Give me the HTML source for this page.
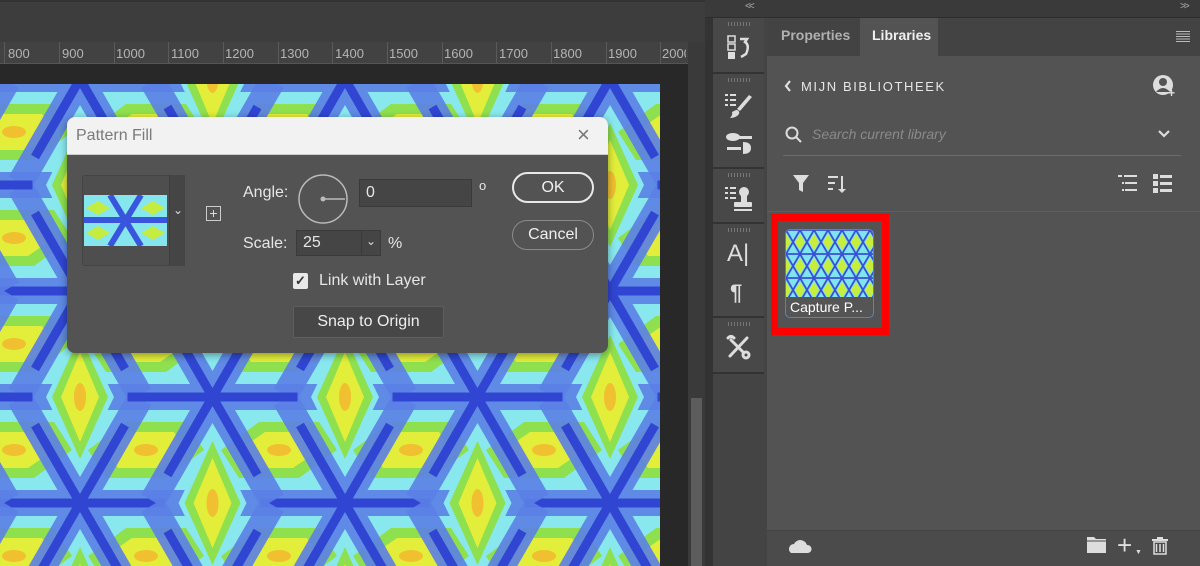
<!DOCTYPE html>
<html><head><meta charset="utf-8"><style>
*{margin:0;padding:0;box-sizing:border-box}
body{width:1200px;height:566px;overflow:hidden;background:#3c3c3c;font-family:"Liberation Sans",sans-serif;position:relative}
.a{position:absolute}
.rl{position:absolute;top:46px;font-size:13px;color:#b4b4b4}
.tk{position:absolute;top:42px;width:1px;height:22px;background:#5a5a5a}
.grp{position:absolute;left:713px;width:51px;background:#484848;border-bottom:2px solid #333}
.grip{position:absolute;left:15px;top:4px;width:22px;height:4px;background:repeating-linear-gradient(90deg,#777 0 1px,transparent 1px 3px)}
.dl{color:#e6e6e6;font-size:16px}
</style></head><body>
<div class="a" style="left:0;top:0;width:705px;height:42px;background:#3d3d3d;border-top:2px solid #333"></div>
<div class="a" style="left:0;top:42px;width:688px;height:22px;background:#424242;border-bottom:1px solid #555"></div>
<div class="tk" style="left:4px"></div><div class="rl" style="left:8px">800</div>
<div class="tk" style="left:59px"></div><div class="rl" style="left:62px">900</div>
<div class="tk" style="left:114px"></div><div class="rl" style="left:116px">1000</div>
<div class="tk" style="left:168px"></div><div class="rl" style="left:171px">1100</div>
<div class="tk" style="left:223px"></div><div class="rl" style="left:225px">1200</div>
<div class="tk" style="left:278px"></div><div class="rl" style="left:280px">1300</div>
<div class="tk" style="left:332px"></div><div class="rl" style="left:335px">1400</div>
<div class="tk" style="left:387px"></div><div class="rl" style="left:389px">1500</div>
<div class="tk" style="left:442px"></div><div class="rl" style="left:444px">1600</div>
<div class="tk" style="left:496px"></div><div class="rl" style="left:499px">1700</div>
<div class="tk" style="left:551px"></div><div class="rl" style="left:553px">1800</div>
<div class="tk" style="left:606px"></div><div class="rl" style="left:608px">1900</div>
<div class="tk" style="left:660px"></div><div class="rl" style="left:662px;width:24px;overflow:hidden">2000</div>
<div class="a" style="left:692px;top:46px;color:#bbb;font-size:12px">^</div>
<div class="a" style="left:0;top:64px;width:688px;height:502px;background:#282828"></div>
<div class="a" style="left:688px;top:42px;width:17px;height:524px;background:#3a3a3a"></div>
<div class="a" style="left:691px;top:398px;width:11px;height:168px;background:#5c5c5c"></div>
<svg class="a" style="left:0;top:84px" width="660" height="482">
<defs>
<g id="st"><g stroke="#5b7fe6" stroke-width="26" opacity="0.9">
<line x1="-105" y1="0" x2="105" y2="0"/><line x1="-60" y1="-104" x2="60" y2="104"/><line x1="60" y1="-104" x2="-60" y2="104"/></g>
<g stroke="#3046d2" stroke-width="9">
<line x1="-85" y1="0" x2="85" y2="0"/><line x1="-45" y1="-78" x2="45" y2="78"/><line x1="45" y1="-78" x2="-45" y2="78"/></g></g>
<g id="vd"><polygon points="0,-70 34,0 0,70 -34,0" fill="#88e8ee"/><polygon points="0,-62 28,0 0,62 -28,0" fill="#8fe04e"/><polygon points="0,-45 19,0 0,45 -19,0" fill="#e3ee3a"/><ellipse rx="6" ry="14" fill="#f0c030"/></g>
<g id="hd"><polygon points="-20,-28 40,-28 58,0 20,28 -40,28 -58,0" fill="#8fe04e"/><polygon points="-14,-18 28,-18 40,0 14,18 -28,18 -40,0" fill="#e3ee3a"/><ellipse rx="12" ry="6" fill="#f0c030"/></g>
<pattern id="p" patternUnits="userSpaceOnUse" x="80" y="-5" width="265" height="212">
<rect width="265" height="212" fill="#88e8ee"/>
<use href="#hd" x="66" y="53"/><use href="#hd" x="199" y="53"/><use href="#hd" x="66" y="159"/><use href="#hd" x="199" y="159"/>
<use href="#st" x="0" y="0"/><use href="#st" x="265" y="0"/><use href="#st" x="0" y="212"/><use href="#st" x="265" y="212"/><use href="#st" x="132.5" y="106"/>
<use href="#vd" x="132.5" y="0"/><use href="#vd" x="132.5" y="212"/><use href="#vd" x="0" y="106"/><use href="#vd" x="265" y="106"/>
</pattern></defs>
<rect width="660" height="482" fill="url(#p)"/>
</svg>
<div class="a" style="left:67px;top:117px;width:541px;height:236px;border-radius:8px;background:#535353;overflow:hidden;box-shadow:0 2px 8px rgba(0,0,0,.4)">
<div class="a" style="left:0;top:0;width:541px;height:38px;background:#f2f2f2;border-bottom:1px solid #ccc"></div>
<div class="a" style="left:9px;top:10px;font-size:16px;color:#7a7a7a">Pattern Fill</div>
<div class="a" style="left:510px;top:5px;font-size:22px;color:#777">×</div>
</div>
<div class="a" style="left:82px;top:175px;width:103px;height:91px;border:1px solid #444;border-radius:3px;background:#4e4e4e"></div>
<div class="a" style="left:169px;top:175px;width:16px;height:91px;background:#454545;border-left:1px solid #3c3c3c"></div>
<div class="a" style="left:173px;top:203px;color:#ddd;font-size:12px">⌄</div>
<svg class="a" style="left:84px;top:195px" width="83" height="51"><rect width="83" height="51" fill="#86e6ee"/>
<polygon points="14,6 26,13 14,20 2,13" fill="#c5ec40"/><polygon points="69,6 81,13 69,20 57,13" fill="#c5ec40"/><polygon points="14,31 26,38 14,45 2,38" fill="#c5ec40"/><polygon points="69,31 81,38 69,45 57,38" fill="#c5ec40"/>
<g stroke="#3a55dd" stroke-width="6"><line x1="0" y1="25" x2="83" y2="25"/><line x1="26" y1="0" x2="57" y2="51"/><line x1="57" y1="0" x2="26" y2="51"/></g></svg>
<div class="a" style="left:206px;top:206px;width:15px;height:15px;border:1px solid #ccc;color:#ddd;font-size:14px;line-height:12px;text-align:center">+</div>
<div class="a dl" style="left:243px;top:184px">Angle:</div>
<svg class="a" style="left:297px;top:173px" width="52" height="52"><circle cx="26" cy="26" r="24" fill="none" stroke="#bbb" stroke-width="1.5"/><circle cx="26" cy="26" r="2.5" fill="#bbb"/><line x1="26" y1="26" x2="48" y2="26" stroke="#bbb" stroke-width="1.5"/></svg>
<div class="a" style="left:359px;top:179px;width:113px;height:28px;background:#454545;border:1px solid #3a3a3a"></div>
<div class="a dl" style="left:366px;top:184px">0</div>
<div class="a dl" style="left:479px;top:178px;font-size:13px">o</div>
<div class="a" style="left:512px;top:172px;width:82px;height:31px;border:2px solid #e8e8e8;border-radius:16px;text-align:center;line-height:27px;color:#f0f0f0;font-size:16px">OK</div>
<div class="a" style="left:512px;top:220px;width:82px;height:30px;border:1px solid #8a8a8a;border-radius:15px;text-align:center;line-height:28px;color:#eee;font-size:16px">Cancel</div>
<div class="a dl" style="left:243px;top:235px">Scale:</div>
<div class="a" style="left:296px;top:230px;width:85px;height:26px;background:#454545;border:1px solid #3a3a3a"></div>
<div class="a" style="left:361px;top:230px;width:1px;height:26px;background:#3a3a3a"></div>
<div class="a dl" style="left:303px;top:234px">25</div>
<div class="a" style="left:366px;top:234px;color:#ddd;font-size:12px">⌄</div>
<div class="a dl" style="left:388px;top:235px">%</div>
<div class="a" style="left:293px;top:273px;width:15px;height:16px;background:#e8e8e8;border-radius:2px;color:#333;font-size:13px;line-height:16px;text-align:center;font-weight:bold">✓</div>
<div class="a dl" style="left:319px;top:272px">Link with Layer</div>
<div class="a" style="left:293px;top:306px;width:151px;height:32px;background:#474747;border:1px solid #5e5e5e;border-radius:2px;text-align:center;line-height:30px;color:#eee;font-size:16px">Snap to Origin</div>
<div class="a" style="left:705px;top:0;width:8px;height:566px;background:#333"></div>
<div class="a" style="left:705px;top:0;width:495px;height:18px;background:#3a3a3a;border-bottom:1px solid #2e2e2e"></div>
<div class="a" style="left:745px;top:1px;color:#aaa;font-size:10px;letter-spacing:-2px">&lt;&lt;</div>
<div class="a" style="left:1180px;top:1px;color:#aaa;font-size:10px;letter-spacing:-2px">&gt;&gt;</div>
<div class="a" style="left:713px;top:18px;width:54px;height:548px;background:#444"></div>
<div class="grp" style="top:18px;height:56px"><div class="grip"></div>
<svg class="a" style="left:14px;top:17px" width="26" height="26"><g fill="#ddd"><rect x="1" y="1" width="7" height="6" fill="none" stroke="#ddd" stroke-width="1.5"/><rect x="1" y="9" width="7" height="6" fill="none" stroke="#ddd" stroke-width="1.5"/><rect x="1" y="17" width="7" height="7"/></g><path d="M13 4 h7 l-2 3 q5 3 1 12 l-5 3" fill="none" stroke="#ddd" stroke-width="2.5"/></svg></div>
<div class="grp" style="top:74px;height:95px"><div class="grip"></div>
<svg class="a" style="left:11px;top:18px" width="30" height="70"><g fill="#ddd"><rect x="1" y="2" width="3" height="2"/><rect x="6" y="2" width="6" height="2"/><rect x="1" y="7" width="3" height="2"/><rect x="6" y="7" width="6" height="2"/><rect x="1" y="12" width="3" height="2"/><rect x="6" y="12" width="6" height="2"/>
<path d="M25 3 l3 2 l-12 14 l-3 -2z"/><path d="M12 18 q4 0 3 4 q-3 4 -9 4 q3 -3 2 -6z"/>
<ellipse cx="9" cy="45" rx="7" ry="4"/><rect x="14" y="44" width="14" height="3"/><rect x="3" y="55" width="14" height="3"/><path d="M19 50 q8 0 8 6 q0 6 -8 6z"/></g></svg></div>
<div class="grp" style="top:169px;height:55px"><div class="grip"></div>
<svg class="a" style="left:11px;top:16px" width="30" height="30"><g fill="#ddd"><rect x="1" y="2" width="3" height="2"/><rect x="6" y="2" width="6" height="2"/><rect x="1" y="7" width="3" height="2"/><rect x="6" y="7" width="6" height="2"/><rect x="1" y="12" width="3" height="2"/><rect x="6" y="12" width="6" height="2"/><circle cx="20" cy="7" r="5"/><rect x="17" y="10" width="6" height="8"/><rect x="10" y="17" width="18" height="5" rx="1"/><rect x="10" y="24" width="18" height="2"/></g></svg></div>
<div class="grp" style="top:224px;height:94px"><div class="grip"></div><div class="a" style="left:14px;top:16px;color:#ddd;font-size:24px">A|</div><div class="a" style="left:17px;top:56px;color:#ddd;font-size:22px;font-weight:bold">¶</div></div>
<div class="grp" style="top:318px;height:56px"><div class="grip"></div>
<svg class="a" style="left:12px;top:16px" width="28" height="28"><g stroke="#ddd" stroke-width="3" fill="none" stroke-linecap="round"><line x1="22" y1="4" x2="5" y2="22"/><line x1="6" y1="6" x2="18" y2="18"/><circle cx="21" cy="21" r="3"/><path d="M3 4 q3 -3 6 0"/></g></svg></div>
<div class="a" style="left:767px;top:18px;width:433px;height:548px;background:#535353"></div>
<div class="a" style="left:767px;top:18px;width:433px;height:38px;background:#434343"></div>
<div class="a" style="left:860px;top:18px;width:78px;height:38px;background:#535353"></div>
<div class="a" style="left:781px;top:27px;color:#b0b0b0;font-size:14px;font-weight:bold">Properties</div>
<div class="a" style="left:872px;top:27px;color:#f0f0f0;font-size:14px;font-weight:bold">Libraries</div>
<div class="a" style="left:1176px;top:31px;width:14px;height:11px;background:repeating-linear-gradient(#bbb 0 1px,transparent 1px 2.5px)"></div>
<svg class="a" style="left:783px;top:79px" width="10" height="14"><path d="M7 2 l-4 5 l4 5" fill="none" stroke="#e0e0e0" stroke-width="2.2"/></svg>
<div class="a" style="left:801px;top:79px;color:#e6e6e6;font-size:13px;letter-spacing:1.6px">MIJN BIBLIOTHEEK</div>
<svg class="a" style="left:1152px;top:74px" width="26" height="24"><circle cx="11" cy="11" r="10" fill="#ddd"/><circle cx="11" cy="8" r="4" fill="#535353"/><path d="M4 18 q7-8 14 0" fill="#535353"/><text x="16" y="23" fill="#ddd" font-size="12" font-family="Liberation Sans" font-weight="bold">+</text></svg>
<svg class="a" style="left:785px;top:126px" width="18" height="18"><circle cx="7" cy="7" r="5.5" fill="none" stroke="#ddd" stroke-width="2"/><line x1="11" y1="11" x2="16" y2="16" stroke="#ddd" stroke-width="2"/></svg>
<div class="a" style="left:812px;top:126px;color:#8a8a8a;font-size:14px;font-style:italic">Search current library</div>
<svg class="a" style="left:1157px;top:129px" width="14" height="10"><path d="M2 2 l5 5 l5 -5" fill="none" stroke="#ddd" stroke-width="2.2"/></svg>
<div class="a" style="left:783px;top:155px;width:398px;height:1px;background:#6a6a6a"></div>
<svg class="a" style="left:792px;top:174px" width="60" height="20"><path d="M1 1 h16 l-6 8 v9 l-4 -2 v-7z" fill="#ddd"/><g fill="#ddd"><rect x="36" y="2" width="10" height="2"/><rect x="36" y="8" width="7" height="2"/><rect x="36" y="14" width="5" height="2"/><rect x="49" y="2" width="2" height="15"/><path d="M46 15 h8 l-4 4z"/></g></svg>
<svg class="a" style="left:1118px;top:174px" width="60" height="20"><g fill="#ddd"><rect x="0" y="1" width="4" height="2"/><rect x="6" y="1" width="13" height="2"/><rect x="4" y="8" width="2" height="2"/><rect x="7" y="8" width="12" height="2"/><rect x="4" y="15" width="2" height="2"/><rect x="7" y="15" width="12" height="2"/>
<rect x="35" y="0" width="5" height="5"/><rect x="42" y="1" width="12" height="3"/><rect x="35" y="7" width="5" height="5"/><rect x="42" y="8" width="12" height="3"/><rect x="35" y="14" width="5" height="5"/><rect x="42" y="15" width="12" height="3"/></g></svg>
<div class="a" style="left:767px;top:211px;width:433px;height:1px;background:#5e5e5e"></div>
<div class="a" style="left:771px;top:214px;width:118px;height:121px;border:7px solid #ff0000"></div>
<div class="a" style="left:785px;top:229px;width:89px;height:89px;border:1.5px solid #5b7be0;border-radius:5px;overflow:hidden;background:#555">
<svg width="89" height="67"><defs><pattern id="q" patternUnits="userSpaceOnUse" width="28" height="24"><rect width="28" height="24" fill="#7fe4ee"/><polygon points="14,4 19,12 14,20 9,12" fill="#c8ee3c"/><polygon points="0,4 5,12 0,20" fill="#c8ee3c"/><polygon points="28,4 23,12 28,20" fill="#c8ee3c"/><g stroke="#3850d8" stroke-width="1.8"><line x1="0" y1="0" x2="28" y2="0"/><line x1="0" y1="24" x2="28" y2="24"/><line x1="0" y1="0" x2="14" y2="24"/><line x1="28" y1="0" x2="14" y2="24"/><line x1="14" y1="0" x2="0" y2="24"/><line x1="14" y1="0" x2="28" y2="24"/></g></pattern></defs><rect width="89" height="67" fill="url(#q)"/></svg>
<div style="position:absolute;left:4px;top:69px;color:#fff;font-size:14px">Capture P...</div></div>
<div class="a" style="left:767px;top:530px;width:433px;height:36px;background:#4b4b4b;border-top:1px solid #444"></div>
<svg class="a" style="left:789px;top:538px" width="24" height="16"><path d="M2 15 a5 5 0 0 1 3-9 a7 7 0 0 1 13 1 a4 4 0 0 1 1 8z" fill="#ddd"/></svg>
<svg class="a" style="left:1086px;top:536px" width="22" height="18"><path d="M1 1 h7 l2 2 h10 v14 h-19z" fill="#ddd"/><line x1="1" y1="5" x2="20" y2="5" stroke="#4b4b4b"/></svg>
<div class="a" style="left:1117px;top:530px;color:#ddd;font-size:26px;line-height:30px">+</div>
<div class="a" style="left:1135px;top:549px;color:#ddd;font-size:7px">▼</div>
<svg class="a" style="left:1152px;top:537px" width="16" height="18"><rect x="0" y="2" width="16" height="2" fill="#ddd"/><rect x="5" y="0" width="6" height="2" fill="#ddd"/><path d="M2 5 h12 v12 h-12z M4.5 7 v8 M8 7 v8 M11.5 7 v8" fill="none" stroke="#ddd" stroke-width="1.5"/></svg>
</body></html>
